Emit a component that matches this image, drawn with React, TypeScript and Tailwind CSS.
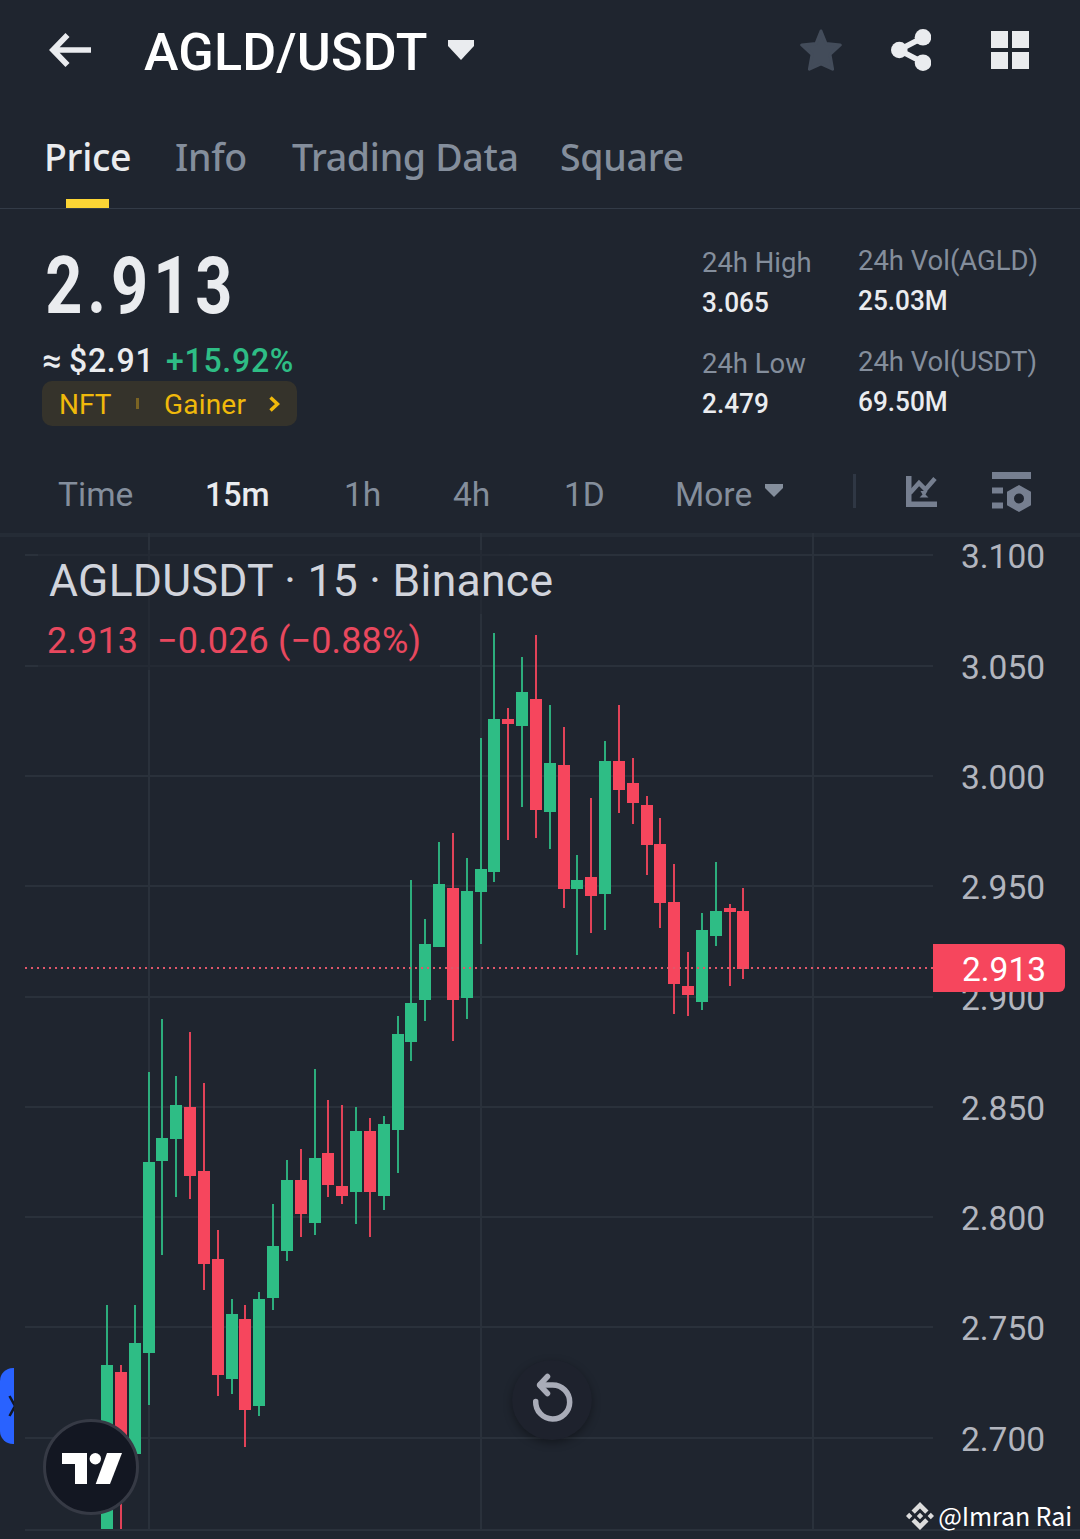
import { useState } from "react";

type Candle = [x: number, high: number, top: number, bottom: number, low: number, up: 0 | 1];

// x, high, body top, body bottom, low, direction (1 = up)
const CANDLES: Candle[] = [
  [101, 1305, 1365, 1529, 1529, 1],
  [115, 1365, 1372, 1470, 1529, 0],
  [129, 1305, 1343, 1454, 1460, 1],
  [143, 1072, 1162, 1353, 1405, 1],
  [156, 1019, 1138, 1161, 1255, 1],
  [170, 1076, 1105, 1139, 1197, 1],
  [184, 1032, 1107, 1176, 1199, 0],
  [198, 1083, 1171, 1264, 1290, 0],
  [212, 1230, 1259, 1375, 1396, 0],
  [226, 1299, 1314, 1379, 1394, 1],
  [239, 1305, 1319, 1410, 1447, 0],
  [253, 1292, 1299, 1406, 1416, 1],
  [267, 1204, 1246, 1298, 1310, 1],
  [281, 1160, 1180, 1251, 1261, 1],
  [295, 1149, 1180, 1214, 1237, 0],
  [309, 1069, 1158, 1223, 1235, 1],
  [322, 1100, 1153, 1185, 1197, 0],
  [336, 1105, 1186, 1196, 1204, 0],
  [350, 1107, 1131, 1192, 1224, 1],
  [364, 1118, 1131, 1192, 1237, 0],
  [378, 1116, 1124, 1196, 1210, 1],
  [392, 1016, 1034, 1130, 1173, 1],
  [405, 880, 1003, 1042, 1061, 1],
  [419, 919, 944, 1000, 1021, 1],
  [433, 842, 884, 947, 947, 1],
  [447, 833, 888, 1000, 1041, 0],
  [461, 858, 891, 998, 1019, 1],
  [475, 738, 869, 892, 944, 1],
  [488, 633, 719, 872, 882, 1],
  [502, 708, 719, 724, 840, 0],
  [516, 657, 692, 726, 807, 1],
  [530, 635, 699, 810, 838, 0],
  [544, 705, 763, 812, 849, 1],
  [558, 727, 765, 889, 908, 0],
  [571, 855, 880, 889, 955, 1],
  [585, 798, 877, 896, 933, 0],
  [599, 741, 761, 894, 930, 1],
  [613, 705, 761, 790, 813, 0],
  [627, 758, 783, 803, 824, 0],
  [641, 796, 805, 845, 875, 0],
  [654, 818, 844, 903, 928, 0],
  [668, 864, 902, 984, 1014, 0],
  [682, 952, 986, 995, 1016, 0],
  [696, 913, 930, 1002, 1010, 1],
  [710, 862, 911, 936, 946, 1],
  [724, 904, 908, 912, 986, 0],
  [737, 888, 911, 969, 979, 0],
];

const PRICE_LEVELS = [
  { label: "3.100", y: 555 },
  { label: "3.050", y: 666 },
  { label: "3.000", y: 776 },
  { label: "2.950", y: 886 },
  { label: "2.900", y: 997 },
  { label: "2.850", y: 1107 },
  { label: "2.800", y: 1217 },
  { label: "2.750", y: 1327 },
  { label: "2.700", y: 1438 },
];

const TABS = [
  { name: "Price", width: "w-[88px]" },
  { name: "Info", width: "w-[74px]" },
  { name: "Trading Data", width: "w-[225px]" },
  { name: "Square", width: "w-[126px]" },
];

const INTERVALS = [
  { name: "Time", width: "w-[147px]" },
  { name: "15m", width: "w-[139px]" },
  { name: "1h", width: "w-[109px]" },
  { name: "4h", width: "w-[111px]" },
  { name: "1D", width: "w-[109px]" },
];

function Header() {
  return (
    <header className="flex h-[104px] items-center pl-[49px] pr-[51px]">
      <svg className="mb-1 h-[34px] w-[42px] shrink-0" viewBox="0 0 42 34" fill="none" stroke="#eaecef" strokeWidth="5.7">
        <path d="M42 17H4M18.5 2L4 17l14.5 15" />
      </svg>
      <h1 className="mt-0.5 ml-[53px] w-[304px] whitespace-nowrap text-[52px] leading-[60px] font-medium tracking-[0.2px] text-white">AGLD/USDT</h1>
      <svg className="mb-1 h-5 w-[26px] shrink-0" viewBox="0 0 26 20" fill="#eaecef">
        <path d="M0 0h26v6L13 20 0 6z" />
      </svg>
      <div className="mb-1 ml-auto flex items-center">
        <svg className="h-[42px] w-[42px]" viewBox="0 0 42 42" fill="#434c5a" stroke="#434c5a" strokeWidth="3" strokeLinejoin="round">
          <path d="M21 2l5 12.500 14.300 1.500-10.300 9.500 2.600 14.700L21 35 9.400 40.200 12 25.500 1.700 16 16 14.500z" />
        </svg>
        <svg className="ml-[49px] h-[42px] w-10" viewBox="0 0 40 42" fill="#eaecef">
          <path d="M32 8.500L8 21l24 12.500" fill="none" stroke="#eaecef" strokeWidth="5.500" />
          <circle cx="8.300" cy="21" r="8.300" />
          <circle cx="32" cy="8.300" r="8.300" />
          <circle cx="32" cy="33.700" r="8.300" />
        </svg>
        <svg className="ml-[60px] h-[38px] w-[38px]" viewBox="0 0 38 38" fill="#eaecef">
          <path d="M0 0h17v17H0zM21 0h17v17H21zM0 21h17v17H0zM21 21h17v17H21z" />
        </svg>
      </div>
    </header>
  );
}

function Tabs() {
  const [active, setActive] = useState("Price");
  return (
    <nav className="flex h-[105px] gap-[43px] border-b border-[#333b47] pl-11 font-['Noto_Sans',sans-serif]">
      {TABS.map((tab) => (
        <button
          key={tab.name}
          onClick={() => setActive(tab.name)}
          className={`relative flex h-[104px] items-center whitespace-nowrap pt-[3px] text-[37.5px] font-medium tracking-[-0.3px] ${tab.width} ${
            active === tab.name ? "text-[#eaecef]" : "text-[#848e9c]"
          }`}
        >
          {tab.name}
          {active === tab.name && <span className="absolute bottom-0 left-[22px] h-[9px] w-[43px] bg-[#fcd535]" />}
        </button>
      ))}
    </nav>
  );
}

function Stat({ label, value }: { label: string; value: string }) {
  return (
    <div className="h-[101px] whitespace-nowrap text-[28px]">
      <div className="origin-left scale-x-[0.98] leading-[40px] text-[#848e9c]">{label}</div>
      <div className="origin-left scale-x-[0.935] leading-[39px] font-medium text-[#eaecef]">{value}</div>
    </div>
  );
}

function PriceSummary() {
  return (
    <section className="flex h-[247px] pl-[42px]">
      <div className="w-[660px] pt-[37px]">
        <div className="origin-left scale-x-[0.82] pl-1 text-[79px] leading-[80px] font-bold tracking-[6px] text-[#eaecef]">2.913</div>
        <div className="mt-3.5 flex h-[41px] items-center text-[34px] font-medium whitespace-nowrap text-[#eaecef]">
          <span className="w-[27px] text-[34px] tracking-normal">≈</span>
          <span className="w-[97px] origin-left scale-x-[0.94] tracking-[0.8px]">$2.91</span>
          <span className="origin-left scale-x-[0.94] tracking-[0.8px] text-[#2ebd85]">+15.92%</span>
        </div>
        <div className="flex h-[45px] w-[255px] items-center rounded-[10px] bg-[#35332b] pl-[17px] text-[28px] text-[#f0b90b]">
          <span className="mt-0.5 w-[77px]">NFT</span>
          <span className="h-[11px] w-[3px] bg-[#7b6423]" />
          <span className="mt-0.5 ml-[25px] w-[105px] tracking-[0.2px]">Gainer</span>
          <svg className="h-4 w-[11px]" viewBox="0 0 11 16" fill="none" stroke="#f0b90b" strokeWidth="3.500">
            <path d="M1.500 1.500L8.500 8l-7 6.500" />
          </svg>
        </div>
      </div>
      <div className="w-[156px] pt-[34px]">
        <Stat label="24h High" value="3.065" />
        <Stat label="24h Low" value="2.479" />
      </div>
      <div className="pt-8">
        <Stat label="24h Vol(AGLD)" value="25.03M" />
        <Stat label="24h Vol(USDT)" value="69.50M" />
      </div>
    </section>
  );
}

function IntervalBar() {
  const [active, setActive] = useState("15m");
  return (
    <div className="flex h-[77px] items-center pl-[58px] text-[33.500px] leading-10 text-[#848e9c]">
      {INTERVALS.map((item) => (
        <button
          key={item.name}
          onClick={() => setActive(item.name)}
          className={`origin-left text-left ${item.width} ${active === item.name ? "scale-x-[0.96] font-medium text-[#eaecef]" : ""}`}
        >
          {item.name}
        </button>
      ))}
      <button className="flex w-[180px] items-center pl-0.5">
        <span className="w-[90px] text-left">More</span>
        <svg className="mb-2 h-[13px] w-[18px]" viewBox="0 0 18 13" fill="#848e9c">
          <path d="M0 0h18v4L9 13 0 4z" />
        </svg>
      </button>
      <span className="mb-[7px] h-[34px] w-[3px] bg-[#2f3744]" />
      <svg className="mb-1.5 ml-[50px] h-[31px] w-[31px]" viewBox="0 0 31 31" fill="none" stroke="#767f90" strokeWidth="5.500">
        <path d="M2.750 0v28.200H31" />
        <path d="M4 17L13 7l6.500 6.500L29 2.500" strokeWidth="4.500" />
        <path d="M13.500 21.500l3-3-2-3.500h7l-2 3.500 3 3z" fill="#767f90" stroke="none" />
      </svg>
      <svg className="mb-[5px] ml-[55px] h-10 w-[39px]" viewBox="0 0 39 40" fill="#767f90">
        <path d="M0 0h39v7H0zM0 15.500h11v6H0zM0 30.500h11v6H0z" />
        <path fillRule="evenodd" d="M27 13l12 6.700v13.600L27 40l-12-6.700V19.700zM27 21.500a5 5 0 1 0 0 10 5 5 0 0 0 0-10z" />
      </svg>
    </div>
  );
}

function Chart() {
  return (
    <svg className="block h-[1006px] w-[1080px]" viewBox="0 533 1080 1006" fontFamily="Roboto, sans-serif">
      <rect x="0" y="533" width="1080" height="4" fill="#252c36" />
      <g fill="#2a313b">
        {[148, 480, 812].map((x) => (
          <rect key={x} x={x} y="533" width="2" height="996" />
        ))}
        {PRICE_LEVELS.map((level) => (
          <rect key={level.label} x="25" y={level.y - 1} width="908" height="2" />
        ))}
        <rect x="25" y="1529" width="1055" height="2" />
      </g>
      {/* legend backdrop dims the grid behind the text */}
      <g fill="#1f252f" opacity="0.5">
        <rect x="38" y="550" width="542" height="64" />
        <rect x="38" y="614" width="402" height="56" />
      </g>

      {CANDLES.map(([x, high, top, bottom, low, up]) => (
        <g key={x} fill={up ? "#2ebd85" : "#f6465d"}>
          <rect x={x + 5} y={high} width="2" height={low - high} opacity="0.9" />
          <rect x={x} y={top} width="12" height={bottom - top} />
        </g>
      ))}
      <path d="M25 968H933" stroke="#e0566a" strokeWidth="2" strokeDasharray="2 4" />

      <text x="49" y="596" fontSize="44.500" fill="#d1d4dc" textLength="504">AGLDUSDT · 15 · Binance</text>
      <g fontSize="36" fill="#e8485e">
        <text x="47" y="653" textLength="91">2.913</text>
        <text x="157" y="653" textLength="264">−0.026 (−0.88%)</text>
      </g>

      <g fontSize="33.500" fill="#b2b5be">
        {PRICE_LEVELS.map((level) => (
          <text key={level.label} x="961" y={level.y + 12.5} textLength="84">{level.label}</text>
        ))}
      </g>
      <path d="M933 944h126a6 6 0 0 1 6 6v36a6 6 0 0 1-6 6H933z" fill="#f6465d" />
      <text x="962" y="981" fontSize="33.500" fill="#fff" textLength="84">2.913</text>
    </svg>
  );
}

export default function App() {
  return (
    <div className="relative h-[1539px] w-[1080px] overflow-hidden bg-[#1f252f] font-[Roboto,sans-serif]">
      <Header />
      <Tabs />
      <PriceSummary />
      <IntervalBar />
      <Chart />

      {/* drawer handle */}
      <button className="absolute top-[1368px] left-0 h-[76px] w-3.5 overflow-hidden rounded-l-[13px] bg-[#2962ff]">
        <svg className="h-[76px] w-3.5" viewBox="0 0 14 76" fill="none" stroke="#131722" strokeWidth="2.500">
          <path d="M9.500 28L15 38l-5.500 10" />
        </svg>
      </button>

      {/* TradingView badge */}
      <div className="absolute top-[1419px] left-[43px] h-24 w-24 rounded-full border-[3px] border-[#363a45] bg-[#131722]">
        <svg className="h-[90px] w-[90px]" viewBox="46 1422 90 90" fill="#fff">
          <path d="M62 1453h25v31H75v-20H62z" />
          <circle cx="95.300" cy="1458.800" r="5.700" />
          <path d="M107 1453h15l-12 31H95.700z" />
        </svg>
      </div>

      {/* reset zoom */}
      <button className="absolute top-[1360px] left-[512px] h-20 w-20 rounded-full bg-[#1e222d] shadow-[0_3px_8px_rgba(0,0,0,0.35)]">
        <svg className="h-20 w-20" viewBox="512 1360 80 80" fill="none" stroke="#a9acb8" strokeWidth="5.500" strokeLinecap="round" strokeLinejoin="round">
          <path d="M535.700 1401.500A17 17 0 1 0 552.700 1385H540" />
          <path d="M547.500 1376.500L539.500 1385l8 8.500" />
        </svg>
      </button>

      {/* author watermark */}
      <div className="absolute right-2 bottom-[6px] flex items-center gap-1 whitespace-nowrap">
        <svg className="h-7 w-7" viewBox="0 0 28 28" fill="#dcdcdc">
          <path d="M14 0l8.500 8.500-3.300 3.300L14 6.600l-5.200 5.200-3.300-3.300z" />
          <path d="M14 28l8.500-8.500-3.300-3.300L14 21.400l-5.200-5.200-3.300 3.300z" />
          <path d="M14 10.800l3.200 3.200-3.200 3.200-3.200-3.200zM3.200 10.800L6.400 14l-3.200 3.200L0 14zM24.800 10.800L28 14l-3.200 3.200-3.200-3.200z" />
        </svg>
        <span className="mb-0.5 font-['Noto_Sans_CJK_SC',sans-serif] text-[25px] leading-8 font-normal tracking-[-0.1px] text-white">@Imran Rai</span>
      </div>
    </div>
  );
}
